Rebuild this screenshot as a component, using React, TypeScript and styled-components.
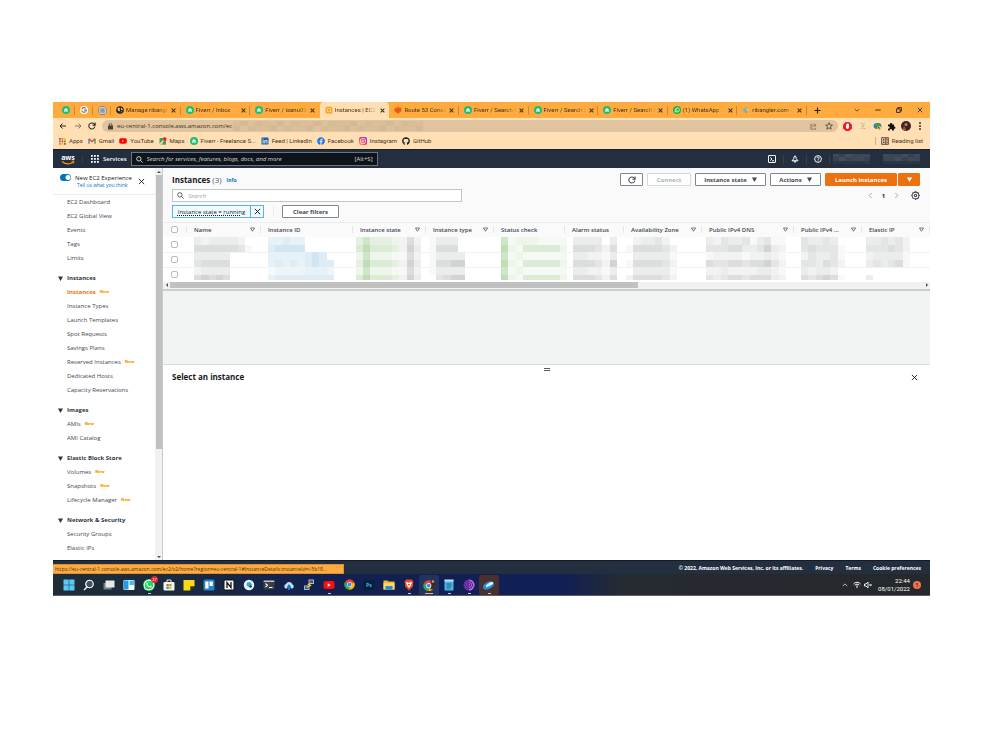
import React from "react";
import styled, { createGlobalStyle } from "styled-components";
import {
  FaFacebook,
  FaGithub,
  FaLinkedin,
  FaWhatsapp,
  FaYoutube,
} from "react-icons/fa";

const UI = '"Open Sans", "Noto Sans", sans-serif';
const SYSTEM = 'Roboto, "Open Sans", sans-serif';

const GlobalStyle = createGlobalStyle`
  * { box-sizing: border-box; }
  body { margin: 0; background: #fff; font-family: ${UI}; font-size: 6px; line-height: 8px; color: #16191f; }
  button, input { font: inherit; color: inherit; margin: 0; padding: 0; border: 0; background: none; border-radius: 0; outline: none; }
  button { cursor: pointer; }
  a { color: inherit; text-decoration: none; }
  svg { display: block; flex: none; }
  ul { list-style: none; margin: 0; padding: 0; }
  h1, h2, h3, p { margin: 0; font-size: inherit; }
`;

/* ---------- shell ---------- */

const Page = styled.div`
  display: flex;
  height: 100vh;
  padding: 102px 70px 154px 53px;
`;

const Desktop = styled.div`
  display: flex;
  flex-direction: column;
  flex: 1;
  min-width: 0;
  min-height: 0;
  overflow: hidden;
`;

const Row = styled.div<{ $gap?: number }>`
  display: flex;
  align-items: center;
  gap: ${(p) => p.$gap ?? 0}px;
`;

const Spacer = styled.div`
  flex: 1;
`;

const IconButton = styled.button<{ $w?: number; $color?: string; $end?: boolean }>`
  display: flex;
  align-items: center;
  justify-content: ${(p) => (p.$end ? "flex-end" : "center")};
  width: ${(p) => p.$w ?? 14}px;
  flex: none;
  color: ${(p) => p.$color ?? "inherit"};
`;

/* ---------- browser ---------- */

const TabStrip = styled.div`
  display: flex;
  align-items: stretch;
  flex: none;
  height: 16px;
  padding-left: 4px;
  background: #ffab40;
  color: #4a3212;
  font-family: ${SYSTEM};
`;

const TabList = styled.div`
  display: flex;
  flex: 1;
  min-width: 0;
`;

const PinnedTab = styled.button`
  display: flex;
  align-items: center;
  justify-content: center;
  width: 18px;
  position: relative;
  &::after {
    content: "";
    position: absolute;
    right: 0;
    top: 4px;
    width: 1px;
    height: 9px;
    background: #c98a3c;
  }
`;

const Tab = styled.div<{ $active?: boolean; $line?: boolean }>`
  display: flex;
  align-items: center;
  flex: 1 1 0;
  min-width: 0;
  gap: 2px;
  padding: 0 4px 0 5px;
  position: relative;
  border-radius: 4px 4px 0 0;
  background: ${(p) => (p.$active ? "#ffdfb3" : "transparent")};
  &::after {
    content: "";
    position: absolute;
    right: 0;
    top: 4px;
    width: ${(p) => (p.$line ? 1 : 0)}px;
    height: 9px;
    background: #c98a3c;
  }
`;

const TabTitle = styled.button`
  flex: 1;
  min-width: 0;
  overflow: hidden;
  white-space: nowrap;
  text-align: left;
  mask-image: linear-gradient(to right, #000 75%, transparent);
`;

const WindowControls = styled.div`
  display: flex;
  align-items: center;
  justify-content: flex-end;
  width: 123px;
  color: #2b2010;
`;

const AddressRow = styled.div`
  display: flex;
  align-items: center;
  flex: none;
  height: 16px;
  padding: 0 3px;
  background: #ffdfb3;
  color: #2b2418;
`;

const Omnibox = styled.div`
  display: flex;
  align-items: center;
  flex: 1;
  height: 12px;
  gap: 4px;
  margin: 0 1px 0 3px;
  padding: 0 4px 0 6px;
  border-radius: 6px;
  background: #dfc49f;
`;

const UrlText = styled.input`
  width: 116px;
  height: 10px;
  color: #3a3022;
`;

const BookmarkBar = styled.nav`
  display: flex;
  align-items: center;
  flex: none;
  height: 15px;
  gap: 5px;
  padding: 0 7px 1px 6px;
  background: #ffdfb3;
  color: #3f3526;
  font-family: ${SYSTEM};
  white-space: nowrap;
`;

const Bookmark = styled.a`
  display: flex;
  align-items: center;
  gap: 3px;
`;

const ReadingList = styled(Bookmark)`
  padding-left: 5px;
  border-left: 1px solid #cdb38c;
`;

/* ---------- console navigation ---------- */

const ConsoleNav = styled.header`
  display: flex;
  align-items: center;
  flex: none;
  height: 19px;
  padding-left: 8px;
  border-top: 1px solid #16202d;
  background: #232f3e;
  color: #fff;
`;

const Services = styled.button`
  display: flex;
  align-items: center;
  gap: 4px;
  margin-left: 7px;
  padding-left: 8px;
  border-left: 1px solid #2e3b4b;
  font-weight: 600;
`;

const ConsoleSearch = styled.label`
  display: flex;
  align-items: center;
  gap: 4px;
  width: 247px;
  height: 14px;
  margin-left: 4px;
  padding: 0 4px;
  border: 1px solid #6b7480;
  background: #0f141a;
  color: #d5dbdb;
`;

const ConsoleSearchInput = styled.input`
  flex: 1;
  min-width: 0;
  &::placeholder {
    color: #d5dbdb;
    opacity: 1;
    font-style: italic;
  }
`;

const NavIcon = styled.button`
  display: flex;
  align-items: center;
  justify-content: center;
  width: 23px;
  height: 9px;
  border-right: 1px solid #35414f;
`;

const NavAccount = styled.div`
  display: flex;
  justify-content: space-between;
  width: 100px;
  padding: 0 10px 0 3px;
`;

/* ---------- workspace ---------- */

const Workspace = styled.div`
  display: flex;
  flex: 1;
  min-height: 0;
`;

const Sidebar = styled.aside`
  display: flex;
  flex: none;
  width: 110px;
  border-right: 1px solid #c6cccc;
  background: #fff;
`;

const SideBody = styled.div`
  flex: 1;
  min-width: 0;
  overflow: hidden;
`;

const SideHeader = styled.div`
  display: flex;
  align-items: center;
  height: 27px;
  padding: 1px 10px 0 7px;
  border-bottom: 1px solid #eaeded;
`;

const ToggleLabel = styled.label`
  display: flex;
  gap: 4px;
  flex: 1;
  white-space: nowrap;
  color: #16191f;
`;

const ToggleInput = styled.input`
  appearance: none;
  flex: none;
  width: 11px;
  height: 7px;
  border-radius: 4px;
  background: radial-gradient(circle at 8px 50%, #fff 2px, #0073bb 3px);
`;

const ThinkLink = styled.a`
  display: block;
  padding-left: 2px;
  font-size: 5px;
  line-height: 7px;
  color: #0073bb;
`;

const SideHeading = styled.h3`
  display: flex;
  align-items: center;
  gap: 4px;
  height: 14px;
  margin-top: 6px;
  padding-left: 5px;
  font-weight: 700;
  color: #2f3844;
`;

const SideItem = styled.a<{ $active?: boolean }>`
  display: flex;
  align-items: center;
  gap: 4px;
  height: 14px;
  padding-left: 14px;
  font-weight: ${(p) => (p.$active ? 700 : 400)};
  color: ${(p) => (p.$active ? "#ec7211" : "#414851")};
  white-space: nowrap;
`;

const NewTag = styled.span`
  font-size: 4px;
  font-weight: 800;
  color: #ff9900;
`;

const ScrollTrack = styled.div`
  display: flex;
  flex-direction: column;
  align-items: center;
  width: 7px;
  background: #f1f1f1;
`;

const ScrollArrow = styled.button`
  display: flex;
  align-items: center;
  justify-content: center;
  flex: none;
  width: 7px;
  height: 7px;
`;

const ScrollThumb = styled.div`
  width: 6px;
  flex: 0 0 70%;
  background: #c1c1c1;
`;

const Main = styled.main`
  display: flex;
  flex-direction: column;
  flex: 1;
  min-width: 0;
  background: #f2f3f3;
`;

const ListPanel = styled.section`
  background: #fafafa;
  border-bottom: 2px solid #c8cdcd;
`;

const PanelControls = styled.div`
  display: flex;
  flex-direction: column;
  gap: 3px;
  padding: 5px 10px 4px 9px;
`;

const Title = styled.h1`
  display: flex;
  align-items: center;
  gap: 2px;
  height: 12px;
  font-size: 8px;
  line-height: 10px;
  font-weight: 700;
`;

const Count = styled.span`
  font-weight: 400;
  color: #545b64;
`;

const InfoLink = styled.a`
  padding-left: 3px;
  font-size: 5px;
  font-weight: 700;
  color: #0073bb;
`;

const Button = styled.button<{ $w: number; $kind?: "disabled" | "primary" }>`
  display: flex;
  align-items: center;
  justify-content: center;
  gap: 5px;
  width: ${(p) => p.$w}px;
  height: 13px;
  border: 1px solid
    ${(p) => (p.$kind === "primary" ? "#ec7211" : p.$kind === "disabled" ? "#d5dbdb" : "#7f868f")};
  border-radius: 1px;
  background: ${(p) => (p.$kind === "primary" ? "#ec7211" : "#fff")};
  color: ${(p) => (p.$kind === "primary" ? "#fff" : p.$kind === "disabled" ? "#aab7b8" : "#414851")};
  font-weight: 700;
  white-space: nowrap;
`;

const SearchField = styled.label`
  display: flex;
  align-items: center;
  gap: 4px;
  width: 290px;
  height: 13px;
  padding: 0 4px;
  border: 1px solid #c0c7c7;
  background: #fff;
  color: #545b64;
`;

const SearchInput = styled.input`
  flex: 1;
  min-width: 0;
  &::placeholder {
    color: #9aa5a6;
    opacity: 1;
    font-style: italic;
  }
`;

const PageNumber = styled.button`
  width: 11px;
  font-weight: 700;
`;

const Token = styled.div`
  display: flex;
  align-items: stretch;
  height: 13px;
  width: 92px;
  border: 1px solid #5cb3dd;
  background: #f1faff;
`;

const TokenText = styled.button`
  flex: 1;
  white-space: nowrap;
  text-decoration: underline dotted 1px;
  text-underline-offset: 1px;
`;

const TokenClose = styled.button`
  display: flex;
  align-items: center;
  justify-content: center;
  width: 13px;
  border-left: 1px solid #5cb3dd;
`;

const FilterDivider = styled.div`
  width: 1px;
  height: 11px;
  margin: 0 8px 0 9px;
  background: #eaeded;
`;

const Table = styled.table`
  width: 100%;
  table-layout: fixed;
  border-collapse: collapse;
  border-top: 1px solid #eaeded;
`;

const HeadCell = styled.th`
  height: 14px;
  padding: 0 6px 0 7px;
  text-align: left;
  font-weight: 600;
  color: #414851;
  background: linear-gradient(#e3e7e7, #e3e7e7) right center / 1px 7px no-repeat;
  &:first-child {
    padding-left: 8px;
  }
`;

const HeadContent = styled.div`
  display: flex;
  align-items: center;
  justify-content: space-between;
  white-space: nowrap;
`;

const BodyRow = styled.tr`
  background: #fff;
  & + & > td {
    box-shadow: inset 0 1px #f1f3f3;
  }
`;

const Cell = styled.td<{ $inset?: number }>`
  height: 15px;
  padding: 0 0 0 ${(p) => p.$inset ?? 8}px;
`;

const Checkbox = styled.input`
  appearance: none;
  display: block;
  width: 7px;
  height: 7px;
  border: 1px solid #b4bcbc;
  border-radius: 2px;
  background: #fff;
`;

const HorizontalScroll = styled.div`
  display: flex;
  align-items: center;
  height: 7px;
  background: #f1f1f1;
`;

const HorizontalThumb = styled.div`
  flex: none;
  width: 61%;
  height: 6px;
  background: #c1c1c1;
`;

const SplitPanel = styled.section`
  flex: 0 0 50%;
  margin-top: auto;
  padding: 0 9px;
  border-top: 1px solid #d5dbdb;
  background: #fff;
`;

const DragHandle = styled.button`
  display: block;
  width: 6px;
  height: 3px;
  margin: 3px auto 0;
  border-top: 1px solid #545b64;
  border-bottom: 1px solid #545b64;
`;

/* ---------- footer and task bar ---------- */

const Footer = styled.footer`
  display: flex;
  align-items: center;
  justify-content: flex-end;
  flex: none;
  height: 14px;
  gap: 12px;
  padding-right: 9px;
  position: relative;
  border-top: 1px solid #131b26;
  background: #232f3e;
  color: #fff;
  font-size: 5px;
  font-weight: 700;
`;

const StatusBubble = styled.div`
  position: absolute;
  left: 0;
  bottom: 0;
  min-width: 291px;
  height: 10px;
  padding: 0 2px;
  border: 1px solid #d9903a;
  border-left: 0;
  background: #ffab40;
  color: #4a3212;
  font-weight: 400;
  line-height: 8px;
  white-space: nowrap;
`;

const TaskBar = styled.div`
  display: flex;
  align-items: center;
  flex: none;
  height: 22px;
  padding: 0 9px 0 6px;
  background: linear-gradient(90deg, #1f2d38 0, #1b2a3c 13%, #122050 30%, #102057 58%, #262a31 65%, #25282c 100%);
  border-bottom: 1px solid #5d6166;
  color: #fff;
`;

const TaskItem = styled.button<{ $tone?: string }>`
  display: flex;
  align-items: center;
  justify-content: center;
  position: relative;
  flex: none;
  width: 20px;
  height: 20px;
  background: ${(p) => p.$tone ?? "transparent"};
  border-radius: 2px;
`;

const RunningMark = styled.span<{ $wide?: boolean }>`
  position: absolute;
  bottom: 1px;
  width: ${(p) => (p.$wide ? 8 : 3)}px;
  height: 1px;
  background: ${(p) => (p.$wide ? "#ffa987" : "#c6ccd4")};
`;

const Badge = styled.span`
  position: absolute;
  top: 1px;
  right: 1px;
  width: 7px;
  height: 7px;
  border-radius: 4px;
  background: #e8232a;
  font-size: 4px;
  line-height: 7px;
  text-align: center;
`;

const Clock = styled.button`
  display: block;
  margin: 0 3px 0 5px;
  font-family: ${SYSTEM};
  text-align: right;
`;

const Notice = styled.button`
  width: 8px;
  height: 8px;
  border-radius: 4px;
  background: #f4734e;
  color: #40160a;
  font-size: 5px;
  line-height: 8px;
`;

/* ---------- icons ---------- */

type StrokeProps = { size?: number; w?: number; children: React.ReactNode };
const Stroke = ({ size = 8, w = 1.6, children }: StrokeProps) => (
  <svg width={size} height={size} viewBox="0 0 16 16" fill="none" stroke="currentColor" strokeWidth={w}>
    {children}
  </svg>
);

const Close = ({ size = 6, w = 2.4 }: { size?: number; w?: number }) => (
  <Stroke size={size} w={w}><path d="M2 2l12 12M14 2L2 14" /></Stroke>
);
const SearchIcon = ({ size = 7 }: { size?: number }) => (
  <Stroke size={size} w={2.2}><circle cx="6.5" cy="6.5" r="5" /><path d="M10 10l5 5" /></Stroke>
);
const Reload = ({ size = 8 }: { size?: number }) => (
  <Stroke size={size} w={2.1}><path d="M13.6 9A6 6 0 1 1 12 3.8L14 6" /><path d="M14.3 1v5.3H9" /></Stroke>
);
const Arrow = ({ flip }: { flip?: boolean }) => (
  <Stroke w={2}><path d={flip ? "M2 8h12M9 3l5 5-5 5" : "M14 8H2M7 3L2 8l5 5"} /></Stroke>
);
const Chevron = ({ d, size = 7 }: { d: string; size?: number }) => (
  <Stroke size={size} w={1.8}><path d={d} /></Stroke>
);
const Caret = ({ size = 5 }: { size?: number }) => (
  <svg width={size} height={size} viewBox="0 0 10 10"><path d="M0 1h10L5 10z" fill="currentColor" /></svg>
);
const SortCaret = () => (
  <svg width="5" height="5" viewBox="0 0 10 10"><path d="M1 2h8L5 8.5z" fill="none" stroke="#545b64" strokeWidth="1.6" /></svg>
);
const Triangle = ({ d }: { d: string }) => (
  <svg width="4" height="4" viewBox="0 0 8 8"><path d={d} fill="#505050" /></svg>
);
const Gear = () => (
  <Stroke size={9} w={1.8}>
    <circle cx="8" cy="8" r="6" /><circle cx="8" cy="8" r="2.200" />
    <path d="M8 .4v2M8 13.600v2M.4 8h2M13.600 8h2M2.800 2.800l1.200 1.200M12 12l1.200 1.200M2.800 13.200L4 12M12 4l1.200-1.200" />
  </Stroke>
);

const Fiverr = () => (
  <svg width="8" height="8" viewBox="0 0 16 16">
    <circle cx="8" cy="8" r="8" fill="#1dbf73" />
    <path d="M3.800 8.200L8 3.800l4.200 4.400h-1V12H9V9.200H7V12H4.800V8.200z" fill="#fff" />
  </svg>
);
const Google = () => (
  <svg width="8" height="8" viewBox="0 0 16 16" fill="none" strokeWidth="2.4">
    <circle cx="8" cy="8" r="8" fill="#fff" />
    <path d="M11.4 4.8A4.6 4.6 0 0 0 4 5.8" stroke="#ea4335" />
    <path d="M4 5.8a4.6 4.6 0 0 0 0 4.4" stroke="#fbbc05" />
    <path d="M4 10.2a4.6 4.6 0 0 0 7 1.2" stroke="#34a853" />
    <path d="M8 8.2h4.6a4.6 4.6 0 0 1-1.6 3.2" stroke="#4285f4" />
  </svg>
);
const WebPage = () => (
  <svg width="9" height="9" viewBox="0 0 16 16" fill="none" stroke="#4b5a70" strokeWidth="1.2">
    <circle cx="8" cy="8" r="7.200" fill="#f2f4f8" />
    <circle cx="8" cy="8" r="4.500" />
    <path d="M5 8h6M5.500 6h5M5.500 10h5" />
  </svg>
);
const DarkGlobe = () => (
  <svg width="8" height="8" viewBox="0 0 16 16">
    <circle cx="8" cy="8" r="7.600" fill="#1f2226" />
    <path d="M2.500 5.500l3-2.500 2.500 1-1 2.500 1.500 1.500-2 3-2-1.500zM10 3l3 2.500.5 3-2.500-.5-1.500-2zM9.500 10.500l2.500.5-2 2.500z" fill="#ffc983" />
  </svg>
);
const Ec2 = () => (
  <svg width="8" height="8" viewBox="0 0 16 16">
    <rect x="1" y="2" width="14" height="13" rx="3" fill="#ff9d1c" />
    <rect x="4.5" y="5.5" width="7" height="6" fill="none" stroke="#ffe2b8" strokeWidth="1.4" />
    <path d="M5 .5v3M8 .5v3M11 .5v3" stroke="#ff9d1c" strokeWidth="1.4" />
  </svg>
);
const Route53 = () => (
  <svg width="8" height="8" viewBox="0 0 16 16">
    <path d="M1 5l3-2 2 1V2l3-1 2 1v2l2-1 2 2v6l-7 4-7-4z" fill="#f4631e" />
    <path d="M8 7v8M1 6l7 3 7-3" stroke="#c64410" strokeWidth="1" fill="none" />
  </svg>
);
const WhatsRound = () => (
  <svg width="8" height="8" viewBox="0 0 16 16">
    <circle cx="8" cy="8" r="8" fill="#17b53c" />
    <path d="M4.2 12l.7-2.3A4.2 4.2 0 1 1 6.4 11.3z" fill="none" stroke="#fff" strokeWidth="1.5" />
    <path d="M6.5 6c0 2 1.5 3.3 3 3.5" stroke="#fff" strokeWidth="1.5" fill="none" />
  </svg>
);
const Diamond = () => (
  <svg width="8" height="8" viewBox="0 0 16 16">
    <path d="M8 1l3.5 3.5L8 8 4.5 4.5z" fill="#8ac66d" />
    <path d="M4.5 4.5L8 8l-3.5 3.500L1 8z" fill="#5fb8d8" />
    <path d="M11.5 4.5L15 8l-3.500 3.500L8 8z" fill="#f2c34c" />
    <path d="M8 8l3.500 3.500L8 15l-3.500-3.500z" fill="#6fa3dc" />
  </svg>
);
const AppsGrid = () => (
  <svg width="7" height="7" viewBox="0 0 14 14">
    {["#e34133", "#f5792b", "#fbbc05", "#4285f4", "#e34133", "#34a853", "#f5792b", "#fbbc05", "#e34133"].map((c, i) => (
      <rect key={i} x={(i % 3) * 5} y={Math.floor(i / 3) * 5} width="3.600" height="3.600" fill={c} />
    ))}
  </svg>
);
const Gmail = () => (
  <svg width="8" height="8" viewBox="0 0 16 16" fill="none" strokeWidth="2.800">
    <path d="M2 13.500V4" stroke="#4285f4" /><path d="M14 13.500V4" stroke="#34a853" />
    <path d="M1.500 3.500L8 9l6.500-5.500" stroke="#ea4335" />
  </svg>
);
const MapsPin = () => (
  <svg width="8" height="8" viewBox="0 0 16 16">
    <rect x="1" y="2" width="13" height="13" rx="2" fill="#34a853" />
    <path d="M1 13L12 2h2v4L5 15H1z" fill="#fbdc6b" /><path d="M7 11l2-2 5 6H9z" fill="#4285f4" />
    <path d="M11.500 0a3.800 3.800 0 0 1 3.800 3.800C15.300 7 11.500 10 11.500 10S7.700 7 7.700 3.800A3.800 3.800 0 0 1 11.500 0z" fill="#ea4335" />
    <circle cx="11.500" cy="3.800" r="1.300" fill="#7c1a12" />
  </svg>
);
const InstagramBadge = () => (
  <svg width="8" height="8" viewBox="0 0 16 16">
    <defs>
      <linearGradient id="insta" x1="0" y1="1" x2="1" y2="0">
        <stop offset="0" stopColor="#fdbb3c" /><stop offset=".5" stopColor="#e8336b" /><stop offset="1" stopColor="#7a3bd8" />
      </linearGradient>
    </defs>
    <rect width="16" height="16" rx="4" fill="url(#insta)" />
    <rect x="3" y="3" width="10" height="10" rx="3" fill="none" stroke="#fff" strokeWidth="1.300" />
    <circle cx="8" cy="8" r="2.300" fill="none" stroke="#fff" strokeWidth="1.300" />
  </svg>
);
const AwsLogo = () => (
  <svg width="14" height="11" viewBox="0 0 28 22">
    <text x="14" y="12" textAnchor="middle" fontFamily="Open Sans, sans-serif" fontWeight="700" fontSize="14" fill="#fff">aws</text>
    <path d="M2 15c7 5.500 16 5.500 22 1.500" fill="none" stroke="#ff9900" strokeWidth="2.400" />
    <path d="M21 14.500l5-.5-1 5" fill="none" stroke="#ff9900" strokeWidth="1.800" />
  </svg>
);
const ServiceGrid = () => (
  <svg width="8" height="8" viewBox="0 0 16 16" fill="#fff">
    {Array.from({ length: 9 }, (_, i) => (
      <rect key={i} x={(i % 3) * 6} y={Math.floor(i / 3) * 6} width="3.600" height="3.600" />
    ))}
  </svg>
);

const ChromeMark = () => (
  <svg width="11" height="11" viewBox="0 0 24 24">
    <path d="M12 12L2 6.500A11.500 11.500 0 0 1 22.300 7z" fill="#ea4335" />
    <path d="M12 12L22.300 7A11.500 11.500 0 0 1 11 23.500z" fill="#fbbc05" />
    <path d="M12 12L11 23.500A11.500 11.500 0 0 1 2 6.500z" fill="#34a853" />
    <circle cx="12" cy="12" r="5.400" fill="#fff" /><circle cx="12" cy="12" r="4.200" fill="#4285f4" />
  </svg>
);

const WhatsTask = styled(FaWhatsapp)`
  border-radius: 6px;
  background: #25d366;
  color: #fff;
`;

const task = (body: React.ReactNode) => (
  <svg width="12" height="12" viewBox="0 0 24 24">{body}</svg>
);

type TaskEntry = { name: string; icon: React.ReactNode; run?: boolean; wide?: boolean; tone?: string; badge?: string };

const tasks: TaskEntry[] = [
  { name: "Start", icon: task(<g fill="#5cc8f5"><path d="M1 1h10.500v10.500H1zM12.500 1H23v10.500H12.500zM1 12.500h10.500V23H1zM12.500 12.500H23V23H12.500z" /></g>) },
  { name: "Search", icon: task(<g fill="none" stroke="#fff" strokeWidth="2.400"><circle cx="13" cy="10" r="7.500" fill="#46525f" /><path d="M8 16l-6 6" /></g>) },
  { name: "Task view", icon: task(<><rect x="1" y="8" width="16" height="13" fill="#777f87" /><rect x="5" y="3" width="18" height="14" fill="#e6e8ea" /></>) },
  { name: "Widgets", icon: task(<><rect x="1" y="2" width="22" height="20" rx="2" fill="#fff" /><rect x="2" y="3" width="9" height="18" fill="#1d9bf0" /><rect x="13" y="3" width="9" height="9" fill="#3fc0f7" /></>) },
  { name: "WhatsApp", icon: <WhatsTask size={12} />, run: true, badge: "27" },
  { name: "Store", icon: task(<><rect x="1" y="6" width="22" height="17" rx="2" fill="#f3f5f7" /><path d="M8 6V2h8v4" fill="none" stroke="#dfe5ea" strokeWidth="2" /><path d="M7 10h4.500v4.500H7z" fill="#f25022" /><path d="M12.500 10H17v4.500h-4.500z" fill="#7fba00" /><path d="M7 15.500h4.500V20H7z" fill="#00a4ef" /><path d="M12.500 15.500H17V20h-4.500z" fill="#ffb900" /></>) },
  { name: "Sticky notes", icon: task(<><path d="M1 2h22v13h-8v8H1z" fill="#ffd90f" /><path d="M15 23v-8h8z" fill="#39341c" /></>) },
  { name: "Trello", icon: task(<><rect x="1" y="1" width="22" height="22" rx="3" fill="#2684c9" /><rect x="4.500" y="5" width="6.500" height="14" fill="#fff" /><rect x="13" y="5" width="6.500" height="9" fill="#fff" /></>) },
  { name: "Notion", icon: task(<><rect x="2" y="2" width="20" height="20" rx="3" fill="#f7f7f5" stroke="#111" strokeWidth="2" /><path d="M8 18V7l8 10V6" fill="none" stroke="#111" strokeWidth="2.600" /></>) },
  { name: "Remote", icon: task(<><circle cx="12" cy="12" r="10.500" fill="#e7f4fb" /><path d="M8 7l6-1 4 5-4 5-5-1-2-4z" fill="#35a5dc" /><circle cx="15" cy="15" r="2.500" fill="#183a5c" /></>) },
  { name: "Terminal", icon: task(<><rect x="1" y="3" width="22" height="18" rx="2" fill="#3b3f44" /><path d="M1 5a2 2 0 0 1 2-2h18a2 2 0 0 1 2 2v1H1z" fill="#bfc3c7" /><path d="M5 9l4 3.500L5 16M12 17h7" stroke="#fff" strokeWidth="2.200" fill="none" /></>) },
  { name: "Cloud", icon: task(<><path d="M5 19a5 5 0 0 1 1-9 7 7 0 0 1 13 1 4.500 4.500 0 0 1 0 8h-3l-4-6-4 6z" fill="#bfe4fa" /><path d="M12 10l5 7h-3v5h-4v-5H7z" fill="#1b74c4" /></>) },
  { name: "PuTTY", icon: task(<><rect x="11" y="1" width="11" height="9" fill="#a9b7c6" /><rect x="13" y="3" width="7" height="5" fill="#2c4fa0" /><rect x="2" y="13" width="11" height="9" fill="#a9b7c6" /><rect x="4" y="15" width="7" height="5" fill="#2c4fa0" /><path d="M17 8l-6 3 4 2-8 4" fill="none" stroke="#ffd31a" strokeWidth="2.400" /></>) },
  { name: "YouTube", icon: task(<><rect x="1" y="4" width="22" height="16" rx="4" fill="#ff0d0d" /><path d="M9.500 8.500v7l6-3.500z" fill="#fff" /></>), run: true },
  { name: "Chrome", icon: <ChromeMark /> },
  { name: "Photoshop", icon: task(<><rect x="1" y="2" width="22" height="20" rx="3" fill="#061d36" /><text x="12" y="16" textAnchor="middle" fontSize="11" fontWeight="700" fontFamily="Open Sans, sans-serif" fill="#3ba8fb">Ps</text></>) },
  { name: "Explorer", icon: task(<><path d="M1 3h8l2 2h12v16H1z" fill="#f2b72c" /><path d="M1 8h22v13H1z" fill="#ffd868" /><path d="M5 14h14v7H5z" fill="#2f86d6" /></>) },
  { name: "Brave", icon: task(<><path d="M7 1h10l4 4-1 4v6l-8 8-8-8V9L3 5z" fill="#f3481f" /><path d="M6 6l6 1.500L18 6l-2 7-4 5-4-5z" fill="#fff" /><path d="M9.500 10h5L12 14z" fill="#f3481f" /></>), run: true },
  { name: "Chrome profile", icon: task(<><g transform="scale(.95) translate(0 2)"><path d="M12 12L2 6.500A11.500 11.500 0 0 1 22.300 7z" fill="#ea4335" /><path d="M12 12L22.300 7A11.500 11.500 0 0 1 11 23.500z" fill="#fbbc05" /><path d="M12 12L11 23.500A11.500 11.500 0 0 1 2 6.500z" fill="#34a853" /><circle cx="12" cy="12" r="5.400" fill="#fff" /><circle cx="12" cy="12" r="4" fill="#4285f4" /></g><path d="M15 3l5-3 4 3v7l-3 10-7 1 3-7z" fill="#3c2925" /><circle cx="20" cy="5" r="2.600" fill="#c99a7c" /></>), wide: true, tone: "#23325f" },
  { name: "Notepad", icon: task(<><rect x="3" y="2" width="18" height="21" rx="1" fill="#49b4e8" /><rect x="3" y="1" width="18" height="4" fill="#bfe2f3" /><path d="M7 10h10M7 14h10M7 18h8" stroke="#14506f" strokeWidth="1.600" /></>), run: true },
  { name: "Tor", icon: task(<><circle cx="12" cy="12" r="11" fill="#6b2fa0" /><path d="M12 1a11 11 0 0 1 0 22z" fill="#b56de0" /><path d="M12 5a7 7 0 0 1 0 14M12 9a3 3 0 0 1 0 6" fill="none" stroke="#4a1a78" strokeWidth="2" /></>), run: true },
  { name: "Recorder", icon: task(<><ellipse cx="11" cy="13" rx="12" ry="7" transform="rotate(-28 11 13)" fill="#1f8fe8" /><ellipse cx="13" cy="11" rx="8" ry="3" transform="rotate(-28 13 11)" fill="#eaf6ff" /></>), run: true, tone: "#4a2f2c" },
];

/* ---------- redacted cells ---------- */

const tones: Record<string, string> = {};
const greys = ["#f8f8f8", "#f2f2f2", "#ebecec", "#e4e5e5", "#dcdddd", "#d2d3d3"];
const greens = ["#f5f9f4", "#eef5eb", "#e5f0e1", "#dbebd5", "#cfe5c7", "#c0ddb6"];
const blues = ["#f5f9fc", "#eef5f9", "#e6f1f8", "#deecf6", "#d1e5f3", "#c2dcee"];
greys.forEach((c, i) => (tones[String(i + 1)] = c));
greens.forEach((c, i) => (tones[String.fromCharCode(97 + i)] = c));
blues.forEach((c, i) => (tones[String.fromCharCode(65 + i)] = c));

const Mosaic = ({ rows, width, last }: { rows: string[]; width: number; last?: boolean }) => (
  <svg width={width} height="15" viewBox={`0 0 ${rows[0].length} 2`} preserveAspectRatio="none" shapeRendering="crispEdges">
    {rows.flatMap((r, y) =>
      [...r].map((ch, x) =>
        ch === "." ? null : (
          <rect key={`${x}-${y}`} x={x} y={y} width="1" height={last && y === 1 ? 0.7 : 1} fill={tones[ch]} />
        )
      )
    )}
  </svg>
);

type Column = { label: string; width: number; sort?: boolean; inset: number; span: number; data: string[] };
const columns: Column[] = [
  { label: "Name", width: 74, sort: true, inset: 7, span: 58, data: ["3233332.", "55555541", "33333...", "45555...", "23333...", "56565..."] },
  { label: "Instance ID", width: 92, inset: 7, span: 66, data: ["CCDCC....", "DEEEE....", "CCCCCDED.", "CDCDCDEDD", "ABBBBCCCB", "CDDDDDDDD"] },
  { label: "Instance state", width: 73, sort: true, inset: 3, span: 65, data: ["cecccb252", "dfdddc263", "bebbba152", "cfdddc263", "bebbba152", "dfdddc263"] },
  { label: "Instance type", width: 68, sort: true, inset: 3, span: 36, data: ["1333.", "1555.", "13333", "15566", "13333", ".4566"] },
  { label: "Status check", width: 71, inset: 7, span: 66, data: ["eabbbaaaa", "fbadddddb", "eabaaaaaa", "fbadddddb", "eabaaaaaa", "fbadddddb"] },
  { label: "Alarm status", width: 59, inset: 8, span: 44, data: ["3333.3", "555425", "332213", "555426", "332213", "555425"] },
  { label: "Availability Zone", width: 78, sort: true, inset: 2, span: 51, data: [".23342.", "1555542", ".333331", "1555542", ".333331", "2555542"] },
  { label: "Public IPv4 DNS", width: 92, sort: true, inset: 4, span: 80, data: ["32433413411", "44455334632", "12222122321", "54455455642", "22322223321", "43455455532"] },
  { label: "Public IPv4 ...", width: 68, sort: true, inset: 7, span: 44, data: ["43343.", "454441", "243341", "443542", "32332.", "545651"] },
  { label: "Elastic IP", width: 68, sort: true, inset: 4, span: 44, data: ["334342", "444542", "233331", "343451", "......", "3....."] },
];

const accountTones = ["#36424f", "#3a4654", "#3f4a58", "#434e5b", "#3c4755"];
const AccountMask = ({ seed }: { seed: number }) => (
  <svg width="37" height="10" viewBox="0 0 6 3" preserveAspectRatio="none" shapeRendering="crispEdges">
    {Array.from({ length: 18 }, (_, i) => (
      <rect key={i} x={i % 6} y={Math.floor(i / 6)} width="1" height="1"
        fill={i < 12 ? accountTones[(i * seed + 2) % 5] : "#2a3645"} />
    ))}
  </svg>
);

/* ---------- data ---------- */

const tabs = [
  { icon: <DarkGlobe />, title: "Manage ribangl" },
  { icon: <Fiverr />, title: "Fiverr / Inbox" },
  { icon: <Fiverr />, title: "Fiverr / isanu09", noLine: true },
  { icon: <Ec2 />, title: "Instances | EC2 M", active: true },
  { icon: <Route53 />, title: "Route 53 Consol" },
  { icon: <Fiverr />, title: "Fiverr / Search R" },
  { icon: <Fiverr />, title: "Fiverr / Search R" },
  { icon: <Fiverr />, title: "Fiverr / Search R" },
  { icon: <WhatsRound />, title: "(1) WhatsApp" },
  { icon: <Diamond />, title: "ribangler.com -" },
];

const bookmarks = [
  { icon: <AppsGrid />, label: "Apps" },
  { icon: <Gmail />, label: "Gmail" },
  { icon: <FaYoutube size={8} color="#f00" />, label: "YouTube" },
  { icon: <MapsPin />, label: "Maps" },
  { icon: <Fiverr />, label: "Fiverr - Freelance S..." },
  { icon: <FaLinkedin size={8} color="#0a66c2" />, label: "Feed | LinkedIn" },
  { icon: <FaFacebook size={8} color="#1877f2" />, label: "Facebook" },
  { icon: <InstagramBadge />, label: "Instagram" },
  { icon: <FaGithub size={8} color="#16191f" />, label: "GitHub" },
];

type Item = [string, boolean?, boolean?];
const groups: { title?: string; items: Item[] }[] = [
  { items: [["EC2 Dashboard"], ["EC2 Global View"], ["Events"], ["Tags"], ["Limits"]] },
  {
    title: "Instances",
    items: [["Instances", true, true], ["Instance Types"], ["Launch Templates"], ["Spot Requests"], ["Savings Plans"],
      ["Reserved Instances", true], ["Dedicated Hosts"], ["Capacity Reservations"]],
  },
  { title: "Images", items: [["AMIs", true], ["AMI Catalog"]] },
  { title: "Elastic Block Store", items: [["Volumes", true], ["Snapshots", true], ["Lifecycle Manager", true]] },
  { title: "Network & Security", items: [["Security Groups"], ["Elastic IPs"], ["Placement Groups"]] },
];

/* ---------- sections ---------- */

const Browser = () => (
  <>
    <TabStrip>
      <PinnedTab aria-label="Fiverr"><Fiverr /></PinnedTab>
      <PinnedTab aria-label="Google"><Google /></PinnedTab>
      <PinnedTab aria-label="Web"><WebPage /></PinnedTab>
      <TabList>
        {tabs.map((t, i) => (
          <Tab key={i} $active={t.active} $line={!t.active && !t.noLine}>
            {t.icon}
            <TabTitle>{t.title}</TabTitle>
            <IconButton $w={6} aria-label="Close tab"><Close size={5} w={3.4} /></IconButton>
          </Tab>
        ))}
      </TabList>
      <WindowControls>
        <IconButton $w={20} aria-label="New tab"><Stroke size={7} w={2.6}><path d="M8 1v14M1 8h14" /></Stroke></IconButton>
        <Spacer />
        <IconButton $w={21} aria-label="Tab search"><Chevron d="M2 5l6 6 6-6" size={6} /></IconButton>
        <IconButton $w={21} aria-label="Minimize"><Stroke size={6} w={2.4}><path d="M1 8h14" /></Stroke></IconButton>
        <IconButton $w={21} aria-label="Restore"><Stroke size={6} w={2.4}><path d="M1.500 5h9.500v9.500H1.500zM5 5V1.500h9.500V11H11" /></Stroke></IconButton>
        <IconButton $w={21} aria-label="Close"><Close size={6} w={2.2} /></IconButton>
      </WindowControls>
    </TabStrip>
    <AddressRow>
      <IconButton aria-label="Back"><Arrow /></IconButton>
      <IconButton $w={15} $color="#8a7a62" aria-label="Forward"><Arrow flip /></IconButton>
      <IconButton aria-label="Reload"><Reload /></IconButton>
      <Omnibox>
        <svg width="5" height="7" viewBox="0 0 10 14"><rect y="5" width="10" height="8" rx="1" fill="#4a3f30" /><path d="M2.500 6V3.500a2.500 2.500 0 0 1 5 0V6" fill="none" stroke="#4a3f30" strokeWidth="1.600" /></svg>
        <Row>
          <UrlText aria-label="Address" defaultValue="eu-central-1.console.aws.amazon.com/ec" />
          <svg width="190" height="10" viewBox="0 0 26 2" preserveAspectRatio="none" shapeRendering="crispEdges">
            {Array.from({ length: 52 }, (_, i) => (
              <rect key={i} x={i % 26} y={Math.floor(i / 26)} width="1" height="1"
                fill={["#d9be99", "#d6bb97", "#dcc19c", "#d4b995"][(i * 7 + Math.floor(i / 5)) % 4]} />
            ))}
          </svg>
        </Row>
        <Spacer />
        <IconButton $color="#6a5c48" aria-label="Share"><Stroke size={7}><path d="M6 3H2v11h11v-3" /><path d="M5 10c0-4 3-5 7-5M10 1.500L14 5l-4 3.500" /></Stroke></IconButton>
        <IconButton $w={10} $color="#4a3f30" aria-label="Bookmark"><Stroke><path d="M8 1.500l2 4.500 4.800.4-3.700 3.100 1.200 4.800L8 11.700l-4.300 2.600 1.200-4.800L1.200 6.400 6 6z" /></Stroke></IconButton>
      </Omnibox>
      <IconButton $w={16} aria-label="Ad blocker"><svg width="9" height="9" viewBox="0 0 18 18"><path d="M5.500 0h7L18 5.500v7L12.500 18h-7L0 12.500v-7z" fill="#ee1c25" /><path d="M6 7l2-4h3l1 3v5l-2 3H8l-2-3z" fill="#fff" /></svg></IconButton>
      <IconButton $w={15} $color="#b7ab98" aria-label="Extension"><Stroke><path d="M3 3h5a3 3 0 0 1 0 5H5M13 13H8a3 3 0 0 1 0-5h3M3 13h2M11 3h2" /></Stroke></IconButton>
      <IconButton aria-label="Download manager"><svg width="9" height="9" viewBox="0 0 18 18"><ellipse cx="9" cy="8" rx="8" ry="6" fill="#2a7fd0" /><path d="M2 6c3-5 10-5 13-2l-6 5z" fill="#35a04c" /><path d="M9 8h6l2 4-4 5-5-5z" fill="#f2c51f" /><path d="M10 9l3 4" stroke="#222" strokeWidth="2" /></svg></IconButton>
      <IconButton $w={15} $color="#111" aria-label="Extensions"><svg width="9" height="9" viewBox="0 0 18 18"><path d="M2 5h4a2.300 2.300 0 1 1 4.500 0H14v4a2.300 2.300 0 1 1 0 4.500V17h-4a2.300 2.300 0 1 0-4.500 0H2v-4a2.300 2.300 0 1 0 0-4z" fill="currentColor" /></svg></IconButton>
      <IconButton aria-label="Profile"><svg width="10" height="10" viewBox="0 0 20 20"><circle cx="10" cy="10" r="10" fill="#40241f" /><circle cx="10" cy="7" r="3" fill="#b78a74" /><path d="M3 16c2-6 5-6 6-1l1 5c-3 0-5-1-7-4z" fill="#b04a3a" /><path d="M11 12l5 1-2 5-3 1z" fill="#222c3c" /></svg></IconButton>
      <IconButton aria-label="Menu"><svg width="2" height="8" viewBox="0 0 4 16" fill="#2b2418"><circle cx="2" cy="2" r="1.800" /><circle cx="2" cy="8" r="1.800" /><circle cx="2" cy="14" r="1.800" /></svg></IconButton>
    </AddressRow>
    <BookmarkBar>
      {bookmarks.map((b) => (
        <Bookmark href="#" key={b.label}>{b.icon}{b.label}</Bookmark>
      ))}
      <Spacer />
      <ReadingList href="#">
        <Stroke w={1.8}><rect x="1.500" y="1.500" width="13" height="13" /><path d="M4 5h3M4 8h3M4 11h3M9.500 2v12M11 5h2M11 8h2M11 11h2" /></Stroke>
        Reading list
      </ReadingList>
    </BookmarkBar>
  </>
);

const TopNav = () => (
  <ConsoleNav>
    <a href="#" aria-label="AWS home"><AwsLogo /></a>
    <Services><ServiceGrid />Services</Services>
    <ConsoleSearch>
      <SearchIcon />
      <ConsoleSearchInput aria-label="Search the console" placeholder="Search for services, features, blogs, docs, and more" />
      <span>[Alt+S]</span>
    </ConsoleSearch>
    <Spacer />
    <NavIcon aria-label="CloudShell"><Stroke w={2}><rect x="1" y="1" width="14" height="14" rx="1" /><path d="M4.500 5l3.500 3-3.500 3M8 11.500h4" /></Stroke></NavIcon>
    <NavIcon aria-label="Notifications"><Stroke w={2}><path d="M8 1.500L10 4l.5 3.500L14 11.500H2L5.500 7.500 6 4zM6 12l2 3 2-3" /></Stroke></NavIcon>
    <NavIcon aria-label="Help"><Stroke w={1.9}><circle cx="8" cy="8" r="6.800" /><path d="M5.700 6.300c.2-3 4.600-2.800 4.500 0C10 8 8 7.800 8 9.700M8 11v1.800" /></Stroke></NavIcon>
    <NavAccount><AccountMask seed={3} /><AccountMask seed={2} /></NavAccount>
  </ConsoleNav>
);

const SideNav = () => (
  <Sidebar>
    <SideBody>
      <SideHeader>
        <ToggleLabel>
          <ToggleInput type="checkbox" defaultChecked />
          <span>
            New EC2 Experience
            <ThinkLink href="#">Tell us what you think</ThinkLink>
          </span>
        </ToggleLabel>
        <IconButton $w={7} aria-label="Close navigation"><Close size={7} w={2} /></IconButton>
      </SideHeader>
      {groups.map((g, i) => (
        <nav key={i}>
          {g.title && <SideHeading><Caret />{g.title}</SideHeading>}
          <ul>
            {g.items.map(([label, isNew, active]) => (
              <li key={label}>
                <SideItem href="#" $active={active}>{label}{isNew && <NewTag>New</NewTag>}</SideItem>
              </li>
            ))}
          </ul>
        </nav>
      ))}
    </SideBody>
    <ScrollTrack>
      <ScrollArrow aria-label="Scroll up"><Triangle d="M0 6h8L4 2z" /></ScrollArrow>
      <ScrollThumb />
      <Spacer />
      <ScrollArrow aria-label="Scroll down"><Triangle d="M0 2h8L4 6z" /></ScrollArrow>
    </ScrollTrack>
  </Sidebar>
);

const InstanceTable = () => (
  <Table>
    <colgroup>
      <col style={{ width: 24 }} />
      {columns.map((c) => <col key={c.label} style={{ width: c.width }} />)}
    </colgroup>
    <thead>
      <tr>
        <HeadCell><Checkbox type="checkbox" aria-label="Select all" /></HeadCell>
        {columns.map((c) => (
          <HeadCell key={c.label}>
            <HeadContent>{c.label}{c.sort && <SortCaret />}</HeadContent>
          </HeadCell>
        ))}
      </tr>
    </thead>
    <tbody>
      {[0, 1, 2].map((r) => (
        <BodyRow key={r}>
          <Cell><Checkbox type="checkbox" aria-label={`Select row ${r + 1}`} /></Cell>
          {columns.map((c) => (
            <Cell key={c.label} $inset={c.inset}>
              <Mosaic rows={c.data.slice(r * 2, r * 2 + 2)} width={c.span} last={r === 2} />
            </Cell>
          ))}
        </BodyRow>
      ))}
    </tbody>
  </Table>
);

const Console = () => (
  <Main>
    <ListPanel>
      <PanelControls>
        <Row $gap={4}>
          <Title>Instances <Count>(3)</Count><InfoLink href="#">Info</InfoLink></Title>
          <Spacer />
          <Button $w={23} aria-label="Refresh"><Reload /></Button>
          <Button $w={44} $kind="disabled" disabled>Connect</Button>
          <Button $w={71}>Instance state<Caret /></Button>
          <Button $w={51}>Actions<Caret /></Button>
          <Row $gap={1}>
            <Button $w={72} $kind="primary">Launch instances</Button>
            <Button $w={22} $kind="primary" aria-label="More launch options"><Caret /></Button>
          </Row>
        </Row>
        <Row>
          <SearchField>
            <SearchIcon />
            <SearchInput placeholder="Search" aria-label="Search instances" />
          </SearchField>
          <Spacer />
          <IconButton $w={15} $color="#879596" aria-label="Previous page"><Chevron d="M11 2L5 8l6 6" /></IconButton>
          <PageNumber>1</PageNumber>
          <IconButton $w={15} $color="#879596" aria-label="Next page"><Chevron d="M5 2l6 6-6 6" /></IconButton>
          <IconButton $w={16} $end $color="#414851" aria-label="Preferences"><Gear /></IconButton>
        </Row>
        <Row>
          <Token>
            <TokenText>Instance state = running</TokenText>
            <TokenClose aria-label="Remove filter"><Close size={7} w={2.2} /></TokenClose>
          </Token>
          <FilterDivider />
          <Button $w={57}>Clear filters</Button>
        </Row>
      </PanelControls>
      <InstanceTable />
      <HorizontalScroll>
        <ScrollArrow aria-label="Scroll left"><Triangle d="M6 0v8L2 4z" /></ScrollArrow>
        <HorizontalThumb />
        <Spacer />
        <ScrollArrow aria-label="Scroll right"><Triangle d="M2 0v8l4-4z" /></ScrollArrow>
      </HorizontalScroll>
    </ListPanel>
    <SplitPanel>
      <DragHandle aria-label="Resize panel" />
      <Row>
        <Title as="h2">Select an instance</Title>
        <Spacer />
        <IconButton aria-label="Close panel"><Close size={7} w={2} /></IconButton>
      </Row>
    </SplitPanel>
  </Main>
);

const Bottom = () => (
  <>
    <Footer>
      <StatusBubble>https://eu-central-1.console.aws.amazon.com/ec2/v2/home?region=eu-central-1#InstanceDetails:instanceId=i-5b18...</StatusBubble>
      <span>© 2022, Amazon Web Services, Inc. or its affiliates.</span>
      <a href="#">Privacy</a>
      <a href="#">Terms</a>
      <a href="#">Cookie preferences</a>
    </Footer>
    <TaskBar>
      {tasks.map((t) => (
        <TaskItem key={t.name} aria-label={t.name} $tone={t.tone}>
          {t.icon}
          {t.badge && <Badge>{t.badge}</Badge>}
          {(t.run || t.wide) && <RunningMark $wide={t.wide} />}
        </TaskItem>
      ))}
      <Spacer />
      <IconButton $w={13} aria-label="Hidden icons"><Chevron d="M2 11l6-6 6 6" size={6} /></IconButton>
      <IconButton $w={11} aria-label="Network"><Stroke w={2}><path d="M1 6c4-4.500 10-4.500 14 0M3.500 8.500c3-3 6-3 9 0M6 11c1.500-1.500 2.500-1.500 4 0M7 13h2" /></Stroke></IconButton>
      <IconButton $w={11} aria-label="Volume"><Stroke w={1.8}><path d="M1 6h3l4-4v12l-4-4H1zM11 6l4 4M15 6l-4 4" /></Stroke></IconButton>
      <Clock>22:44<br />08/01/2022</Clock>
      <Notice aria-label="Notifications">5</Notice>
    </TaskBar>
  </>
);

export default function App() {
  return (
    <>
      <GlobalStyle />
      <Page>
        <Desktop>
          <Browser />
          <TopNav />
          <Workspace>
            <SideNav />
            <Console />
          </Workspace>
          <Bottom />
        </Desktop>
      </Page>
    </>
  );
}
